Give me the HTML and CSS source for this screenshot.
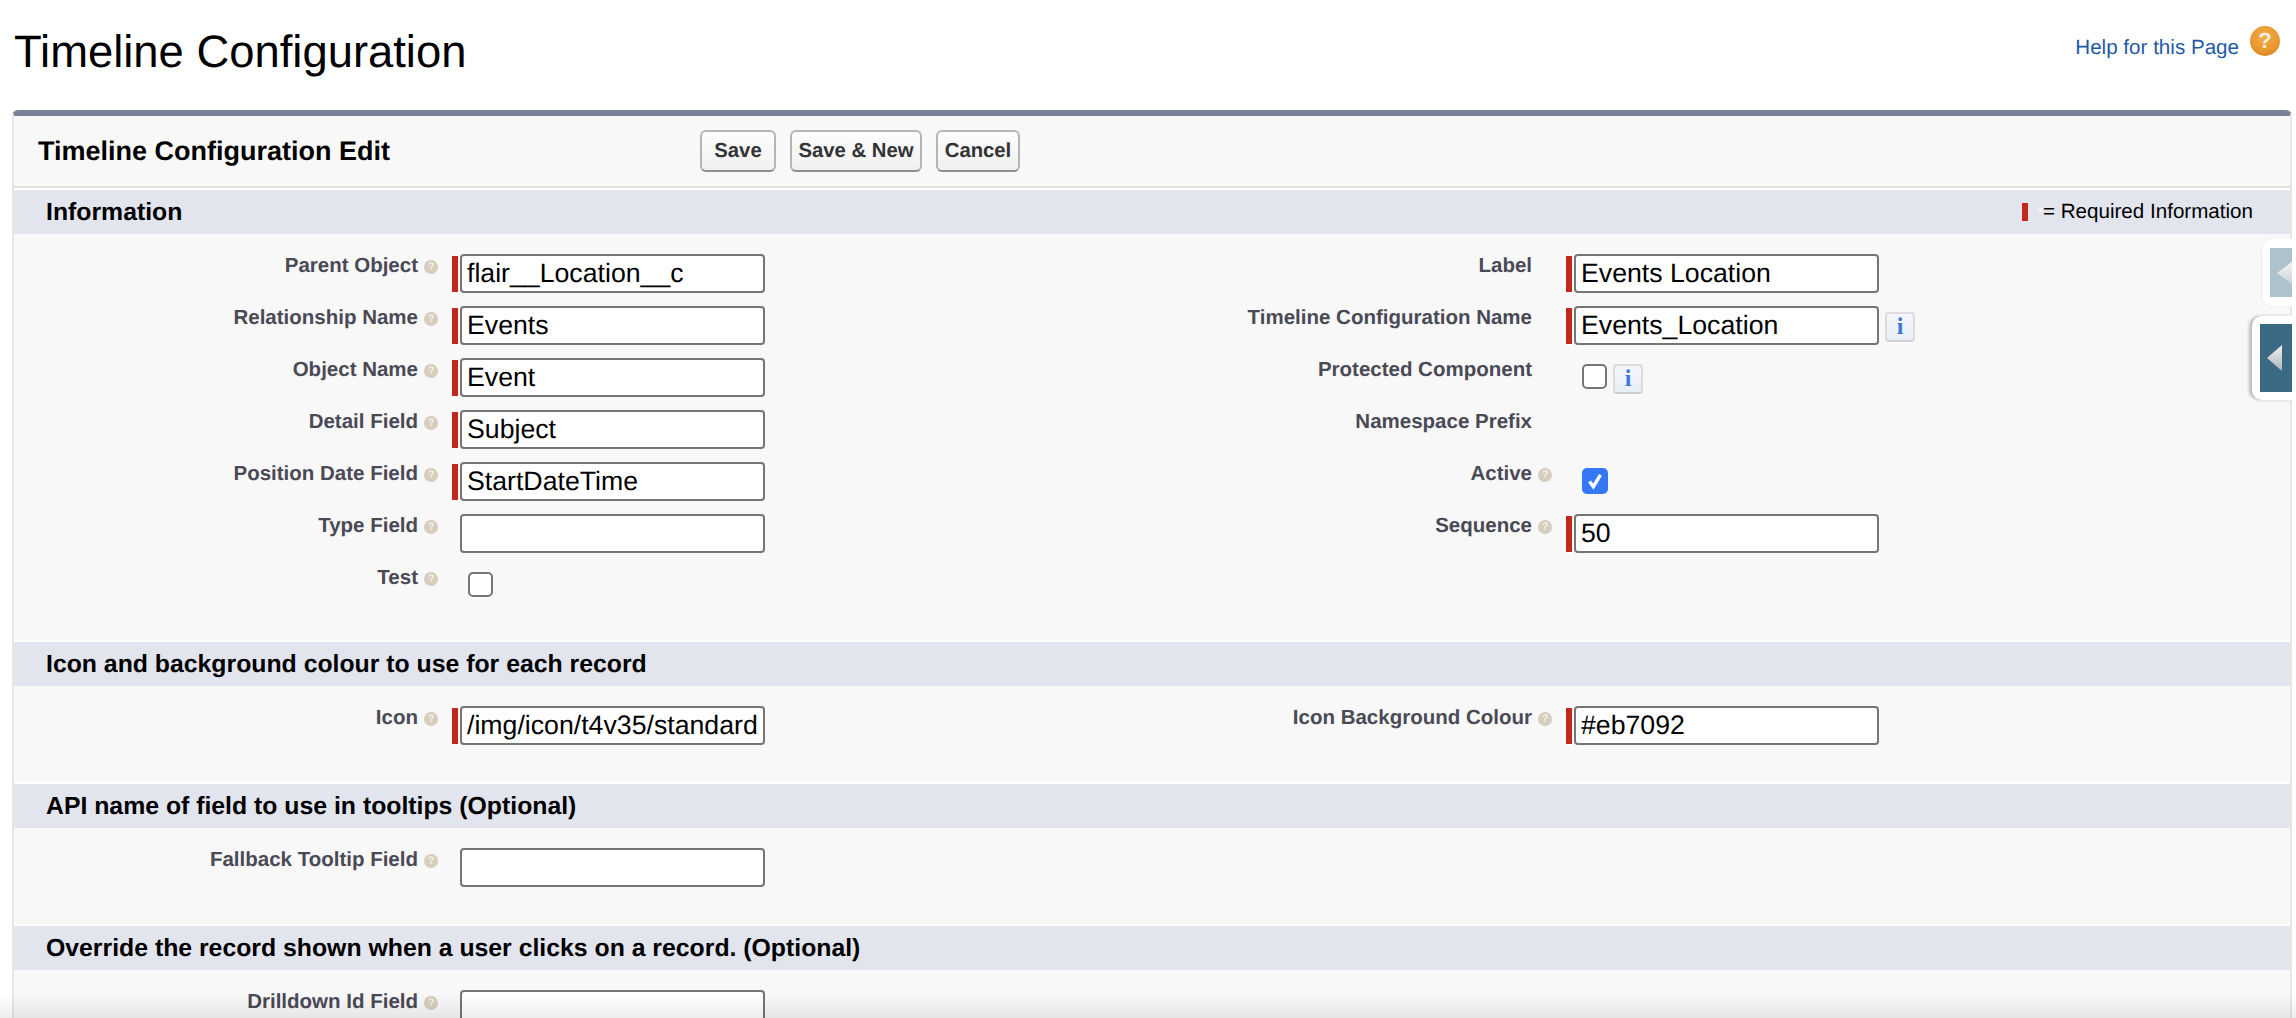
FILE: index.html
```html
<!DOCTYPE html>
<html lang="en">
<head>
<meta charset="utf-8">
<title>Timeline Configuration</title>
<link rel="stylesheet" href="styles.css">
</head>
<body>
<header class="page-head">
  <h1 class="page-title">Timeline Configuration</h1>
  <div class="help-link">
    <a href="#">Help for this Page</a>
    <span class="help-orb">?</span>
  </div>
</header>

<main class="panel">
  <div class="panel-head">
    <h2 class="panel-title">Timeline Configuration Edit</h2>
    <div class="buttons">
      <button class="btn btn-save">Save</button>
      <button class="btn btn-new">Save &amp; New</button>
      <button class="btn btn-cancel">Cancel</button>
    </div>
  </div>
  <div class="panel-rule"></div>

  <section class="band band-first">
    <h3>Information</h3>
    <div class="legend"><span class="req-mark"></span><span class="star">*</span><span>= Required Information</span></div>
  </section>
  <div class="fields fields-main">
    <div class="col col-left">
      <div class="row"><label>Parent Object</label><span class="q">?</span><div class="val"><i class="req"></i><input class="txt" value="flair__Location__c"></div></div>
      <div class="row"><label>Relationship Name</label><span class="q">?</span><div class="val"><i class="req"></i><input class="txt" value="Events"></div></div>
      <div class="row"><label>Object Name</label><span class="q">?</span><div class="val"><i class="req"></i><input class="txt" value="Event"></div></div>
      <div class="row"><label>Detail Field</label><span class="q">?</span><div class="val"><i class="req"></i><input class="txt" value="Subject"></div></div>
      <div class="row"><label>Position Date Field</label><span class="q">?</span><div class="val"><i class="req"></i><input class="txt" value="StartDateTime"></div></div>
      <div class="row"><label>Type Field</label><span class="q">?</span><div class="val"><i class="noreq"></i><input class="txt" value=""></div></div>
      <div class="row"><label>Test</label><span class="q">?</span><div class="val val-check"><span class="check"></span></div></div>
    </div>
    <div class="col col-right">
      <div class="row"><label>Label</label><span class="noq"></span><div class="val"><i class="req"></i><input class="txt" value="Events Location"></div></div>
      <div class="row"><label>Timeline Configuration Name</label><span class="noq"></span><div class="val"><i class="req"></i><input class="txt" value="Events_Location"><span class="info info-after">i</span></div></div>
      <div class="row"><label>Protected Component</label><span class="noq"></span><div class="val val-check"><span class="check"></span><span class="info">i</span></div></div>
      <div class="row"><label>Namespace Prefix</label><span class="noq"></span><div class="val"></div></div>
      <div class="row"><label>Active</label><span class="q">?</span><div class="val val-check"><span class="check check-on"><svg viewBox="0 0 26 26" width="26" height="26"><path d="M7.5 13.5l3.8 5.2L18.5 6.8" fill="none" stroke="#fff" stroke-width="3.4"/></svg></span></div></div>
      <div class="row"><label>Sequence</label><span class="q">?</span><div class="val"><i class="req"></i><input class="txt" value="50"></div></div>
    </div>
  </div>

  <section class="band"><h3>Icon and background colour to use for each record</h3></section>
  <div class="fields fields-small">
    <div class="col col-left">
      <div class="row"><label>Icon</label><span class="q">?</span><div class="val"><i class="req"></i><input class="txt" value="/img/icon/t4v35/standard/event_120.png"></div></div>
    </div>
    <div class="col col-right">
      <div class="row"><label>Icon Background Colour</label><span class="q">?</span><div class="val"><i class="req"></i><input class="txt" value="#eb7092"></div></div>
    </div>
  </div>

  <section class="band"><h3>API name of field to use in tooltips (Optional)</h3></section>
  <div class="fields fields-small">
    <div class="col col-left">
      <div class="row"><label>Fallback Tooltip Field</label><span class="q">?</span><div class="val"><i class="noreq"></i><input class="txt" value=""></div></div>
    </div>
  </div>

  <section class="band"><h3>Override the record shown when a user clicks on a record. (Optional)</h3></section>
  <div class="fields fields-small">
    <div class="col col-left">
      <div class="row"><label>Drilldown Id Field</label><span class="q">?</span><div class="val"><i class="noreq"></i><input class="txt" value=""></div></div>
    </div>
  </div>

  <div class="side-tab side-tab-a">
    <div class="tab-face">
      <svg viewBox="0 0 16 24" width="16" height="24"><defs><linearGradient id="ga" x1="0" y1="0" x2="0" y2="1"><stop offset="0" stop-color="#f4f6f7"/><stop offset="1" stop-color="#c9d3d8"/></linearGradient></defs><path d="M16 0V24L0 12Z" fill="url(#ga)"/></svg>
    </div>
  </div>
  <div class="side-tab side-tab-b">
    <div class="tab-face">
      <svg viewBox="0 0 15 26" width="15" height="26"><defs><linearGradient id="gb" x1="0" y1="0" x2="0" y2="1"><stop offset="0" stop-color="#f2f2f2"/><stop offset="1" stop-color="#b0b4b7"/></linearGradient></defs><path d="M15 0V26L0 13Z" fill="url(#gb)"/></svg>
    </div>
  </div>
</main>
<div class="window-fade"></div>
</body>
</html>
```

FILE: styles.css
```css
html, body {
  margin: 0;
  padding: 0;
  height: 1018px;
  overflow: hidden;
  background: #fff;
  font-family: "Liberation Sans", Arial, sans-serif;
  color: #000;
  text-rendering: geometricPrecision;
}

.page-head {
  height: 110px;
  box-sizing: border-box;
  display: flex;
  justify-content: space-between;
  align-items: flex-start;
  padding: 0 16px 0 14px;
}
.page-title {
  margin: 26px 0 0;
  font-size: 45.4px;
  line-height: 52px;
  font-weight: 400;
}
.help-link {
  display: flex;
  align-items: flex-start;
  gap: 11px;
  padding-top: 26px;
}
.help-link a {
  margin-top: 10px;
  font-size: 20.6px;
  line-height: 24px;
  color: #1f5aa8;
  text-decoration: none;
}
.help-orb {
  width: 30px;
  height: 30px;
  border-radius: 50%;
  background: radial-gradient(circle at 50% 35%, #f0ad4a 0%, #e8962e 60%, #c97a1c 100%);
  color: #fbeedd;
  font-size: 22px;
  font-weight: 700;
  line-height: 30px;
  text-align: center;
}

.panel {
  position: relative;
  margin: 0 4px 0 12px;
  border-top: 6px solid #7a8299;
  border-radius: 6px 6px 0 0;
  border-left: 2px solid #e6e6e6;
  border-right: 2px solid #e6e6e6;
  background: #f8f8f8;
  height: 908px;
  box-sizing: border-box;
}

.panel-head {
  display: flex;
  align-items: flex-start;
  height: 70px;
  box-sizing: border-box;
  padding-top: 14px;
}
.panel-title {
  margin: 6px 0 0 24px;
  width: 662px;
  font-size: 27px;
  line-height: 30px;
  font-weight: 700;
}
.buttons {
  display: flex;
  gap: 14px;
}
.btn {
  height: 42px;
  box-sizing: border-box;
  padding: 0;
  border: 2px solid #b5b5b5;
  border-bottom-color: #8f8f8f;
  border-radius: 6px;
  background: linear-gradient(#fdfdfd, #f0f0f0);
  color: #333;
  font-family: inherit;
  font-size: 20.3px;
  font-weight: 700;
  text-rendering: geometricPrecision;
}
.btn-save { width: 76px; }
.btn-new { width: 132px; }
.btn-cancel { width: 84px; }

.panel-rule {
  height: 2px;
  background: #e2e2e2;
}

.band {
  height: 44px;
  box-sizing: border-box;
  padding: 2px 37px 0 32px;
  background: #e2e5ee;
  display: flex;
  justify-content: space-between;
  align-items: center;
  box-shadow: 0 -2px 0 #fff;
}
.band-first { margin-top: 2px; }
.band h3 {
  margin: 0;
  font-size: 24.8px;
  line-height: 30px;
  font-weight: 700;
}
.legend {
  display: flex;
  align-items: center;
  font-size: 20.6px;
  line-height: 24px;
  margin-top: -2px;
}
.req-mark {
  width: 6px;
  height: 18px;
  background: #c0291c;
}
.star {
  color: #fff;
  margin-left: 10px;
  width: 5px;
  font-size: 12px;
  align-self: flex-start;
}

.fields {
  display: grid;
  grid-template-columns: 1136px 1fr;
  box-sizing: border-box;
}
.fields-main { padding-top: 20px; height: 408px; }
.fields-small { padding-top: 20px; height: 98px; }

.col { display: flex; flex-direction: column; }
.row {
  display: grid;
  height: 52px;
  align-items: start;
}
.col-left .row { grid-template-columns: 404px 34px 1fr; }
.col-right .row { grid-template-columns: 382px 34px 1fr; }

.row label {
  text-align: right;
  font-size: 20.5px;
  line-height: 23px;
  font-weight: 700;
  color: #4a4a56;
}
.q {
  margin: 6px 0 0 6px;
  width: 14px;
  height: 14px;
  border-radius: 50%;
  background: #d6cdbd;
  color: #f3efe8;
  font-size: 11px;
  font-weight: 700;
  line-height: 14px;
  text-align: center;
}

.val {
  display: flex;
  align-items: flex-start;
}
.req, .noreq {
  display: block;
  flex: none;
  width: 6px;
  height: 36px;
  margin: 2px 2px 0 0;
}
.req { background: #c0291c; }

.txt {
  width: 305px;
  height: 39px;
  box-sizing: border-box;
  padding: 0 5px;
  border: 2px solid #757575;
  border-radius: 4px;
  background: #fff;
  font-family: inherit;
  font-size: 26.7px;
  color: #000;
  outline: none;
  text-rendering: geometricPrecision;
}

.val-check { padding: 6px 0 0 16px; gap: 6px; }
.check {
  display: block;
  flex: none;
  width: 25px;
  height: 25px;
  box-sizing: border-box;
  border: 2px solid #767676;
  border-radius: 5px;
  background: #fff;
}
.check-on {
  width: 26px;
  height: 26px;
  border: 0;
  background: #3478f6;
}
.check-on svg { display: block; }

.info {
  display: block;
  flex: none;
  width: 30px;
  height: 30px;
  box-sizing: border-box;
  border: 2px solid #dcdcdc;
  border-bottom-color: #cfcfcf;
  border-radius: 4px;
  background: linear-gradient(#f4f6fb, #e9edf5);
  color: #3b78d8;
  font-family: "Liberation Serif", serif;
  font-size: 24px;
  font-weight: 700;
  line-height: 26px;
  text-align: center;
}
.info-after { margin: 6px 0 0 6px; }

.side-tab {
  position: absolute;
  right: -2px;
  box-sizing: border-box;
  background: #fff;
  border-radius: 10px 0 0 10px;
  overflow: hidden;
}
.tab-face {
  display: flex;
  align-items: center;
  height: 100%;
  box-sizing: border-box;
}
.side-tab-a {
  top: 123px;
  width: 30px;
  height: 67px;
  padding: 9px 0 9px 8px;
  box-shadow: -1px 0 2px rgba(0, 0, 0, 0.06);
}
.side-tab-a .tab-face { background: #adc2cc; padding-left: 7px; }
.side-tab-b {
  top: 200px;
  width: 40px;
  height: 84px;
  padding: 8px 0 8px 8px;
  box-shadow: -3px 0 3px rgba(90, 100, 110, 0.4);
}
.side-tab-b .tab-face { background: #3b6a85; padding-left: 7px; }

.window-fade {
  position: fixed;
  left: 0;
  right: 0;
  bottom: 0;
  height: 24px;
  background: linear-gradient(rgba(0, 0, 0, 0), rgba(0, 0, 0, 0.07));
  pointer-events: none;
}
```
